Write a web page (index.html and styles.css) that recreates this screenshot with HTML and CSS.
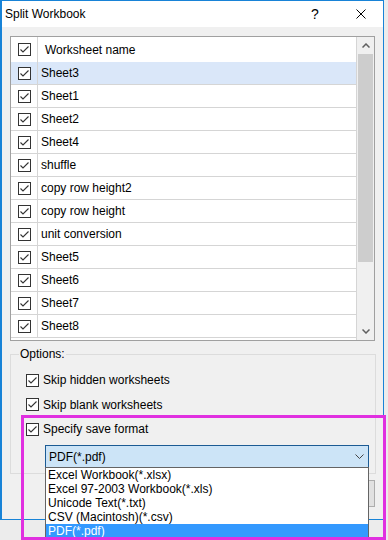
FILE: index.html
```html
<!DOCTYPE html>
<html lang="en">
<head>
    <meta charset="UTF-8">
    <title>Split Workbook</title>
    <link rel="stylesheet" href="styles.css">
</head>
<body>
<div class="desk">
    <div class="window">
        <div class="titlebar">
            <span class="title">Split Workbook</span>
            <span class="help">?</span>
            <svg class="close" width="10" height="10" viewBox="0 0 10 10"><path d="M0.5 0.5 L9.5 9.5 M9.5 0.5 L0.5 9.5" stroke="#000" stroke-width="1" fill="none"/></svg>
        </div>
        <div class="content">
            <div class="sheetlist">
                <div class="rows">
                    <div class="row head">
                        <span class="check-cell"><span class="cb"><svg width="11" height="11" viewBox="0 0 11 11"><path d="M1.5 5.5 L4 8 L9.5 2.5" stroke="#333" stroke-width="1.1" fill="none"/></svg></span></span>
                        <span class="name-cell">Worksheet name</span>
                    </div>
                    <div class="row selected">
                        <span class="check-cell"><span class="cb"><svg width="11" height="11" viewBox="0 0 11 11"><path d="M1.5 5.5 L4 8 L9.5 2.5" stroke="#333" stroke-width="1.1" fill="none"/></svg></span></span>
                        <span class="name-cell">Sheet3</span>
                    </div>
                    <div class="row">
                        <span class="check-cell"><span class="cb"><svg width="11" height="11" viewBox="0 0 11 11"><path d="M1.5 5.5 L4 8 L9.5 2.5" stroke="#333" stroke-width="1.1" fill="none"/></svg></span></span>
                        <span class="name-cell">Sheet1</span>
                    </div>
                    <div class="row">
                        <span class="check-cell"><span class="cb"><svg width="11" height="11" viewBox="0 0 11 11"><path d="M1.5 5.5 L4 8 L9.5 2.5" stroke="#333" stroke-width="1.1" fill="none"/></svg></span></span>
                        <span class="name-cell">Sheet2</span>
                    </div>
                    <div class="row">
                        <span class="check-cell"><span class="cb"><svg width="11" height="11" viewBox="0 0 11 11"><path d="M1.5 5.5 L4 8 L9.5 2.5" stroke="#333" stroke-width="1.1" fill="none"/></svg></span></span>
                        <span class="name-cell">Sheet4</span>
                    </div>
                    <div class="row">
                        <span class="check-cell"><span class="cb"><svg width="11" height="11" viewBox="0 0 11 11"><path d="M1.5 5.5 L4 8 L9.5 2.5" stroke="#333" stroke-width="1.1" fill="none"/></svg></span></span>
                        <span class="name-cell">shuffle</span>
                    </div>
                    <div class="row">
                        <span class="check-cell"><span class="cb"><svg width="11" height="11" viewBox="0 0 11 11"><path d="M1.5 5.5 L4 8 L9.5 2.5" stroke="#333" stroke-width="1.1" fill="none"/></svg></span></span>
                        <span class="name-cell">copy row height2</span>
                    </div>
                    <div class="row">
                        <span class="check-cell"><span class="cb"><svg width="11" height="11" viewBox="0 0 11 11"><path d="M1.5 5.5 L4 8 L9.5 2.5" stroke="#333" stroke-width="1.1" fill="none"/></svg></span></span>
                        <span class="name-cell">copy row height</span>
                    </div>
                    <div class="row">
                        <span class="check-cell"><span class="cb"><svg width="11" height="11" viewBox="0 0 11 11"><path d="M1.5 5.5 L4 8 L9.5 2.5" stroke="#333" stroke-width="1.1" fill="none"/></svg></span></span>
                        <span class="name-cell">unit conversion</span>
                    </div>
                    <div class="row">
                        <span class="check-cell"><span class="cb"><svg width="11" height="11" viewBox="0 0 11 11"><path d="M1.5 5.5 L4 8 L9.5 2.5" stroke="#333" stroke-width="1.1" fill="none"/></svg></span></span>
                        <span class="name-cell">Sheet5</span>
                    </div>
                    <div class="row">
                        <span class="check-cell"><span class="cb"><svg width="11" height="11" viewBox="0 0 11 11"><path d="M1.5 5.5 L4 8 L9.5 2.5" stroke="#333" stroke-width="1.1" fill="none"/></svg></span></span>
                        <span class="name-cell">Sheet6</span>
                    </div>
                    <div class="row">
                        <span class="check-cell"><span class="cb"><svg width="11" height="11" viewBox="0 0 11 11"><path d="M1.5 5.5 L4 8 L9.5 2.5" stroke="#333" stroke-width="1.1" fill="none"/></svg></span></span>
                        <span class="name-cell">Sheet7</span>
                    </div>
                    <div class="row">
                        <span class="check-cell"><span class="cb"><svg width="11" height="11" viewBox="0 0 11 11"><path d="M1.5 5.5 L4 8 L9.5 2.5" stroke="#333" stroke-width="1.1" fill="none"/></svg></span></span>
                        <span class="name-cell">Sheet8</span>
                    </div>
                </div>
                <div class="scrollbar">
                    <div class="sb-btn"><svg width="8" height="5" viewBox="0 0 8 5"><path d="M0.5 4.5 L4 1 L7.5 4.5" stroke="#606060" stroke-width="1.5" fill="none"/></svg></div>
                    <div class="sb-thumb"></div>
                    <div class="sb-track"></div>
                    <div class="sb-btn"><svg width="8" height="5" viewBox="0 0 8 5"><path d="M0.5 0.5 L4 4 L7.5 0.5" stroke="#606060" stroke-width="1.5" fill="none"/></svg></div>
                </div>
            </div>

            <fieldset class="options">
                <legend>Options:</legend>
                <div class="opts">
                    <div class="opt">
                        <span class="cb"><svg width="11" height="11" viewBox="0 0 11 11"><path d="M1.5 5.5 L4 8 L9.5 2.5" stroke="#333" stroke-width="1.1" fill="none"/></svg></span>
                        <span>Skip hidden worksheets</span>
                    </div>
                    <div class="opt">
                        <span class="cb"><svg width="11" height="11" viewBox="0 0 11 11"><path d="M1.5 5.5 L4 8 L9.5 2.5" stroke="#333" stroke-width="1.1" fill="none"/></svg></span>
                        <span>Skip blank worksheets</span>
                    </div>
                    <div class="opt">
                        <span class="cb"><svg width="11" height="11" viewBox="0 0 11 11"><path d="M1.5 5.5 L4 8 L9.5 2.5" stroke="#333" stroke-width="1.1" fill="none"/></svg></span>
                        <span>Specify save format</span>
                    </div>
                </div>
                <div class="combo">
                    <span>PDF(*.pdf)</span>
                    <svg width="9" height="5" viewBox="0 0 9 5"><path d="M0.5 0.5 L4.5 4.5 L8.5 0.5" stroke="#444" stroke-width="1" fill="none"/></svg>
                </div>
            </fieldset>

            <div class="buttons">
                <button>Ok</button>
                <button>Cancel</button>
            </div>
        </div>
    </div>

    <ul class="popup">
        <li>Excel Workbook(*.xlsx)</li>
        <li>Excel 97-2003 Workbook(*.xls)</li>
        <li>Unicode Text(*.txt)</li>
        <li>CSV (Macintosh)(*.csv)</li>
        <li class="current">PDF(*.pdf)</li>
    </ul>

    <div class="highlight"></div>
</div>
</body>
</html>
```

FILE: styles.css
```css
* {
    box-sizing: border-box;
}
body {
    margin: 0;
    font-family: "Liberation Sans", Arial, sans-serif;
    font-size: 12px;
    color: #000;
}
.desk {
    position: relative;
    width: 388px;
    height: 540px;
    overflow: hidden;
    background: #ececec;
}
.window {
    width: 384px;
    height: 520px;
    border: 1px solid #1883d7;
    border-left-width: 2px;
    background: #f0f0f0;
    display: flex;
    flex-direction: column;
}
.titlebar {
    height: 26px;
    flex: none;
    background: #fff;
    display: flex;
    align-items: center;
    padding-left: 3px;
}
.title {
    flex: 1;
}
.help {
    width: 14px;
    text-align: center;
    margin-right: 34px;
    font-size: 14px;
}
.close {
    display: block;
    margin-right: 17px;
}
.content {
    flex: 1;
    padding: 9px 8px 0 8px;
}

/* worksheet list */
.sheetlist {
    height: 305px;
    border: 1px solid #a0a0a0;
    background: #fff;
    display: flex;
}
.rows {
    flex: 1;
    border-right: 1px solid #d5d5d5;
    overflow: hidden;
}
.row {
    height: 23px;
    display: flex;
    border-bottom: 1px solid #d5d5d5;
}
.row.head {
    height: 25px;
    border-bottom: none;
}
.row.selected {
    background: #dae7f9;
}
.check-cell {
    width: 27px;
    flex: none;
    border-right: 1px solid #d5d5d5;
    display: flex;
    align-items: center;
    justify-content: center;
}
.name-cell {
    padding-left: 3px;
    display: flex;
    align-items: center;
}
.head .name-cell {
    padding-left: 7px;
}
.cb {
    width: 13px;
    height: 13px;
    flex: none;
    border: 1px solid #333;
    background: #fff;
    display: flex;
}
.scrollbar {
    width: 17px;
    flex: none;
    background: #f0f0f0;
    display: flex;
    flex-direction: column;
}
.sb-btn {
    height: 17px;
    display: flex;
    align-items: center;
    justify-content: center;
}
.sb-thumb {
    height: 208px;
    margin: 0 1px;
    background: #cdcdcd;
}
.sb-track {
    flex: 1;
}

/* options group */
.options {
    margin: 6px 0 0 0;
    padding: 0 0 5px 0;
    width: 366px;
    min-width: 0;
    border: 1px solid #dcdcdc;
}
.options legend {
    margin-left: 8px;
    padding: 0 1px;
    line-height: 14px;
}
.opts {
    padding: 7px 0 0 15px;
}
.opt {
    height: 24.5px;
    display: flex;
    align-items: center;
    gap: 4px;
}
.combo {
    margin: 3.5px 0 0 34px;
    width: 324px;
    height: 23px;
    padding: 0 4px 0 3px;
    background: #cce4f7;
    border: 1px solid #1c5b94;
    display: flex;
    align-items: center;
    justify-content: space-between;
}
.buttons {
    display: flex;
    justify-content: flex-end;
    gap: 8px;
    margin-top: 6px;
}
.buttons button {
    width: 75px;
    height: 27px;
    font: inherit;
    background: #e1e1e1;
    border: 1px solid #adadad;
}

/* open dropdown */
.popup {
    position: absolute;
    left: 45px;
    top: 467px;
    width: 324px;
    margin: 0;
    padding: 0;
    list-style: none;
    background: #fff;
    border: 1px solid #646464;
}
.popup li {
    height: 14px;
    line-height: 14px;
    padding-left: 2px;
}
.popup li.current {
    background: #3399ff;
    color: #fff;
}
.highlight {
    position: absolute;
    left: 21px;
    top: 415px;
    width: 365px;
    height: 125px;
    border: 3px solid #e030e0;
}
```
